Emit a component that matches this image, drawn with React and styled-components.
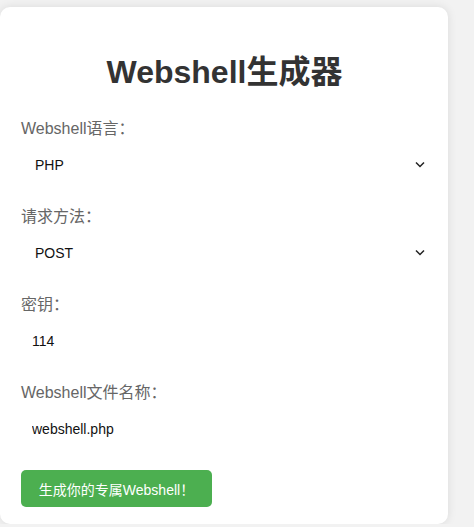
import { createGlobalStyle, styled } from "styled-components";

const GlobalStyle = createGlobalStyle`
  html, body {
    margin: 0;
    padding: 0;
    background: #f2f2f2;
    font-family: "Liberation Sans", Arial, "Noto Sans CJK SC", sans-serif;
  }
`;

const Page = styled.div`
  padding-top: 7px;
  width: 448px;
`;

const Card = styled.div`
  background: #fff;
  border-radius: 10px;
  box-shadow: 0 0 10px rgba(0, 0, 0, 0.1);
  padding: 20px 20px 17px 21px;
`;

const Title = styled.h1`
  margin: 27px 0 28px;
  font-size: 32px;
  line-height: 37px;
  font-weight: bold;
  color: #333;
  text-align: center;
`;

const Label = styled.label`
  display: block;
  font-size: 16px;
  line-height: 19px;
  color: #666;
  margin-bottom: 7px;
`;

const Field = styled.div`
  position: relative;
  height: 40px;
  margin-bottom: 22px;
`;

const Select = styled.select`
  appearance: none;
  width: 100%;
  height: 40px;
  border: none;
  outline: none;
  background: #fff;
  padding: 0 0 0 14px;
  font-family: inherit;
  font-size: 14px;
  color: #111;
`;

const Chevron = styled.svg`
  position: absolute;
  right: 3px;
  top: 16px;
  width: 10px;
  height: 7px;
  pointer-events: none;
`;

const Input = styled.input`
  width: 100%;
  height: 40px;
  box-sizing: border-box;
  border: none;
  outline: none;
  background: #fff;
  padding: 0 11px;
  font-family: inherit;
  font-size: 14px;
  color: #111;
`;

const Button = styled.button`
  display: block;
  margin-top: -1px;
  width: 191px;
  height: 37px;
  border: none;
  border-radius: 5px;
  background: #4caf50;
  color: #fff;
  font-family: inherit;
  font-size: 14px;
  padding: 0;
  cursor: pointer;
`;

const SelectField = ({ id, value, options }) => (
  <Field>
    <Select id={id} defaultValue={value}>
      {options.map((o) => (
        <option key={o}>{o}</option>
      ))}
    </Select>
    <Chevron viewBox="0 0 10 7">
      <path d="M1 1.5 L5 5.5 L9 1.5" fill="none" stroke="#222" strokeWidth="1.5" />
    </Chevron>
  </Field>
);

const App = () => {
  return (
    <Page>
      <GlobalStyle />
      <Card>
        <Title>Webshell生成器</Title>

        <Label htmlFor="lang">Webshell语言：</Label>
        <SelectField id="lang" value="PHP" options={["PHP", "ASP", "JSP"]} />

        <Label htmlFor="method">请求方法：</Label>
        <SelectField id="method" value="POST" options={["POST", "GET"]} />

        <Label htmlFor="key">密钥：</Label>
        <Field>
          <Input id="key" defaultValue="114" />
        </Field>

        <Label htmlFor="filename">Webshell文件名称：</Label>
        <Field>
          <Input id="filename" defaultValue="webshell.php" />
        </Field>

        <Button>生成你的专属Webshell！</Button>
      </Card>
    </Page>
  );
};

export default App;
